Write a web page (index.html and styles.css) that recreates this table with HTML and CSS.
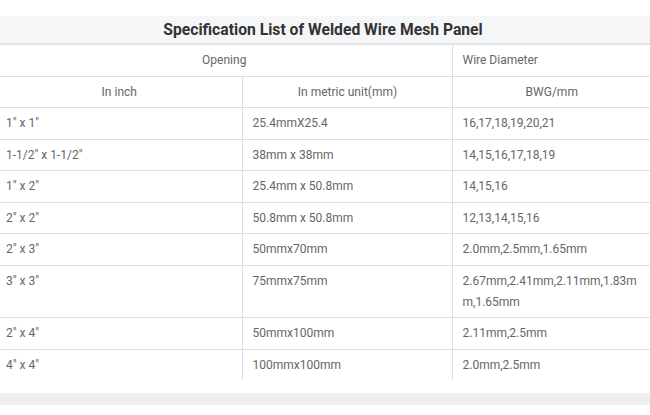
FILE: index.html
```html
<!DOCTYPE html>
<html>
<head>
<meta charset="utf-8">
<link rel="stylesheet" href="styles.css">
</head>
<body>
<div class="wrap">
  <table class="spec">
    <colgroup>
      <col class="c1">
      <col class="c2">
      <col class="c3">
    </colgroup>
    <thead>
      <tr class="title-row"><th colspan="3">Specification List of Welded Wire Mesh Panel</th></tr>
      <tr class="head1"><td colspan="2" class="center">Opening</td><td>Wire Diameter</td></tr>
      <tr class="head2"><td class="center">In inch</td><td class="center">In metric unit(mm)</td><td class="center">BWG/mm</td></tr>
    </thead>
    <tbody>
      <tr><td>1" x 1"</td><td>25.4mmX25.4</td><td>16,17,18,19,20,21</td></tr>
      <tr><td>1-1/2" x 1-1/2"</td><td>38mm x 38mm</td><td>14,15,16,17,18,19</td></tr>
      <tr><td>1" x 2"</td><td>25.4mm x 50.8mm</td><td>14,15,16</td></tr>
      <tr><td>2" x 2"</td><td>50.8mm x 50.8mm</td><td>12,13,14,15,16</td></tr>
      <tr><td>2" x 3"</td><td>50mmx70mm</td><td>2.0mm,2.5mm,1.65mm</td></tr>
      <tr><td>3" x 3"</td><td>75mmx75mm</td><td>2.67mm,2.41mm,2.11mm,1.83mm,1.65mm</td></tr>
      <tr><td>2" x 4"</td><td>50mmx100mm</td><td>2.11mm,2.5mm</td></tr>
      <tr class="last"><td>4" x 4"</td><td>100mmx100mm</td><td>2.0mm,2.5mm</td></tr>
    </tbody>
  </table>
  <div class="band"></div>
</div>
</body>
</html>
```

FILE: styles.css
```css
html, body {
  margin: 0;
  padding: 0;
  background: #ffffff;
  overflow: hidden;
}
.wrap {
  padding-top: 16px;
  width: 650px;
  overflow: hidden;
  font-family: Roboto, "Liberation Sans", sans-serif;
}
.spec {
  margin-left: -4px;
  width: 654px;
  table-layout: fixed;
  border-collapse: collapse;
  font-size: 12px;
  color: #666666;
}
.c1 { width: 246px; }
.c2 { width: 210px; }
.c3 { width: 198px; }
.title-row th {
  background: #f5f6f8;
  color: #333333;
  font-size: 15.7px;
  font-weight: 700;
  height: 27px;
  padding: 0;
  line-height: 27px;
  text-align: center;
  border-bottom: 2px solid #e4e5e7;
}
.spec td {
  padding: 5px 9px 4.5px 10px;
  line-height: 21px;
  text-align: left;
  vertical-align: top;
  border-top: 1px solid #dedede;
  border-left: 1px solid #dedede;
  word-break: break-all;
}
.spec td:first-child {
  border-left: none;
}
.head1 td { border-top: none; }
.spec td.center { text-align: center; }
.band {
  margin-top: 13px;
  height: 12px;
  background: #efeff3;
}
```
